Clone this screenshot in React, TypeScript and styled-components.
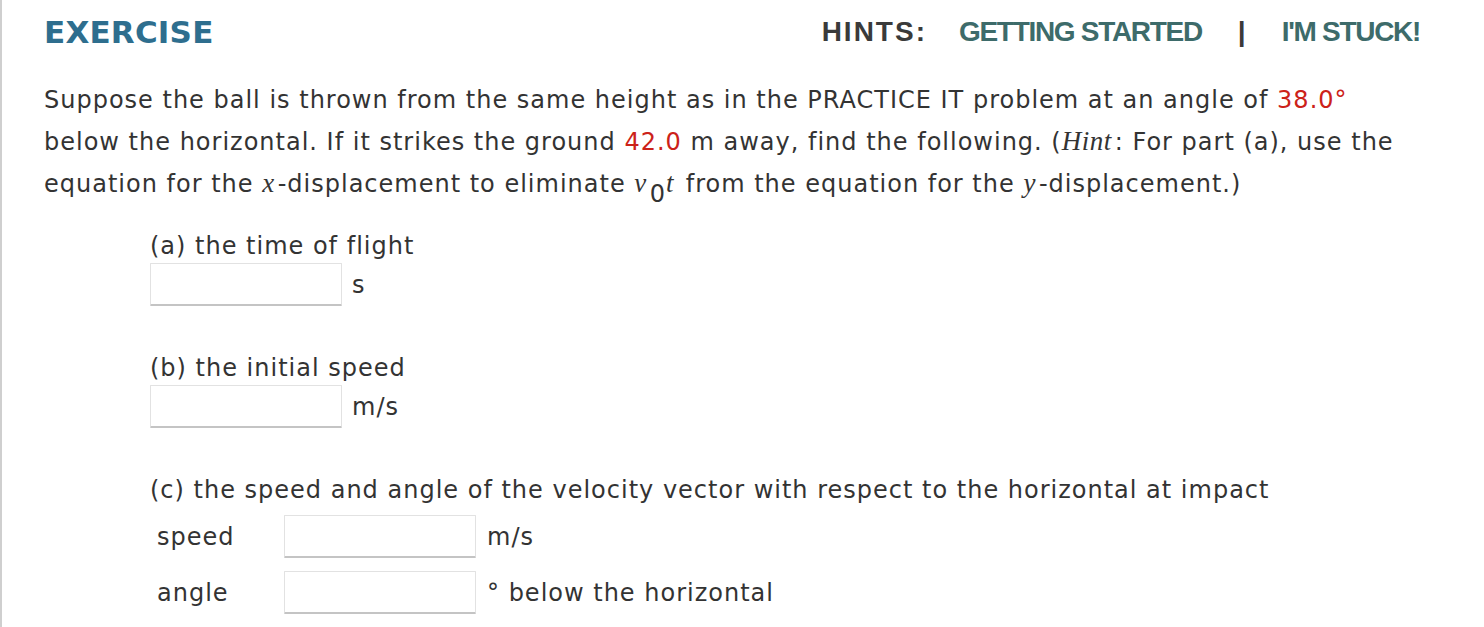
import styled, { createGlobalStyle } from "styled-components";

const GlobalStyle = createGlobalStyle`
  body {
    margin: 0;
    background: #fff;
    font-family: "DejaVu Sans", Verdana, sans-serif;
    color: #333;
  }
`;

const Page = styled.div`
  min-height: 627px;
  box-sizing: border-box;
  border-left: 2px solid #cfcfcf;
  padding: 12px 64px 0 42px;
`;

const Header = styled.header`
  display: flex;
  justify-content: space-between;
  align-items: center;
  height: 40px;
`;

const Title = styled.h1`
  margin: 0;
  font-family: "DejaVu Sans", Verdana, sans-serif;
  font-size: 31px;
  font-weight: bold;
  letter-spacing: 0.2px;
  color: #2e6e8e;
`;

const Hints = styled.nav`
  display: flex;
  align-items: center;
  font-family: "Liberation Sans", Arial, sans-serif;
  font-size: 28px;
  font-weight: bold;
`;

const HintsLabel = styled.span`
  color: #3a3a3a;
  letter-spacing: 2px;
  margin-right: 32px;
`;

const HintLink = styled.a`
  color: #3d6b6a;
  letter-spacing: -1.3px;
  text-decoration: none;
  cursor: pointer;
`;

const Divider = styled.span`
  color: #3a3a3a;
  margin: 0 36px;
`;

const Problem = styled.p`
  margin: 28px 0 0;
  font-size: 24px;
  line-height: 41px;
  letter-spacing: 1px;
`;

const Given = styled.span`
  color: #cc2219;
`;

const MathVar = styled.i`
  font-family: "Liberation Serif", "Times New Roman", serif;
  font-size: 27px;
  letter-spacing: 0.5px;
  padding-right: 3px;
`;

const Sub = styled.sub`
  font-size: 24px;
  vertical-align: -10px;
  line-height: 0;
`;

const Parts = styled.div`
  margin: 26px 0 0 106px;
  display: flex;
  flex-direction: column;
  gap: 47px;
  letter-spacing: 1px;
`;

const Part = styled.section`
  display: flex;
  flex-direction: column;
`;

const PartLabel = styled.div`
  font-size: 24px;
  line-height: 30px;
`;

const AnswerRow = styled.div`
  display: flex;
  align-items: center;
  gap: 10px;
  margin-top: 2px;
`;

const AnswerInput = styled.input`
  box-sizing: border-box;
  width: 192px;
  height: 43px;
  border: 1px solid #e2e2e2;
  border-bottom: 2px solid #c4c4c4;
  border-radius: 1px;
  background: #fff;
  padding: 0 8px;
  font-size: 20px;
  outline: none;
`;

const Unit = styled.span`
  font-size: 24px;
`;

const Fields = styled.div`
  display: grid;
  grid-template-columns: 116px auto 1fr;
  row-gap: 13px;
  column-gap: 11px;
  align-items: center;
  margin-top: 10px;
  padding-left: 7px;
`;

const FieldName = styled.span`
  font-size: 24px;
`;

export default function App() {
  return (
    <>
      <GlobalStyle />
      <Page>
        <Header>
          <Title>EXERCISE</Title>
          <Hints>
            <HintsLabel>HINTS:</HintsLabel>
            <HintLink>GETTING STARTED</HintLink>
            <Divider>|</Divider>
            <HintLink>I'M STUCK!</HintLink>
          </Hints>
        </Header>
        <Problem>
          Suppose the ball is thrown from the same height as in the PRACTICE IT
          problem at an angle of <Given>38.0°</Given> below the horizontal. If
          it strikes the ground <Given>42.0</Given> m away, find the following.
          (<MathVar>Hint</MathVar>: For part (a), use the equation for the{" "}
          <MathVar>x</MathVar>-displacement to eliminate{" "}
          <MathVar>v</MathVar>
          <Sub>0</Sub>
          <MathVar>t</MathVar> from the equation for the{" "}
          <MathVar>y</MathVar>-displacement.)
        </Problem>
        <Parts>
          <Part>
            <PartLabel>(a) the time of flight</PartLabel>
            <AnswerRow>
              <AnswerInput />
              <Unit>s</Unit>
            </AnswerRow>
          </Part>
          <Part>
            <PartLabel>(b) the initial speed</PartLabel>
            <AnswerRow>
              <AnswerInput />
              <Unit>m/s</Unit>
            </AnswerRow>
          </Part>
          <Part>
            <PartLabel>
              (c) the speed and angle of the velocity vector with respect to the
              horizontal at impact
            </PartLabel>
            <Fields>
              <FieldName>speed</FieldName>
              <AnswerInput />
              <Unit>m/s</Unit>
              <FieldName>angle</FieldName>
              <AnswerInput />
              <Unit>° below the horizontal</Unit>
            </Fields>
          </Part>
        </Parts>
      </Page>
    </>
  );
}
